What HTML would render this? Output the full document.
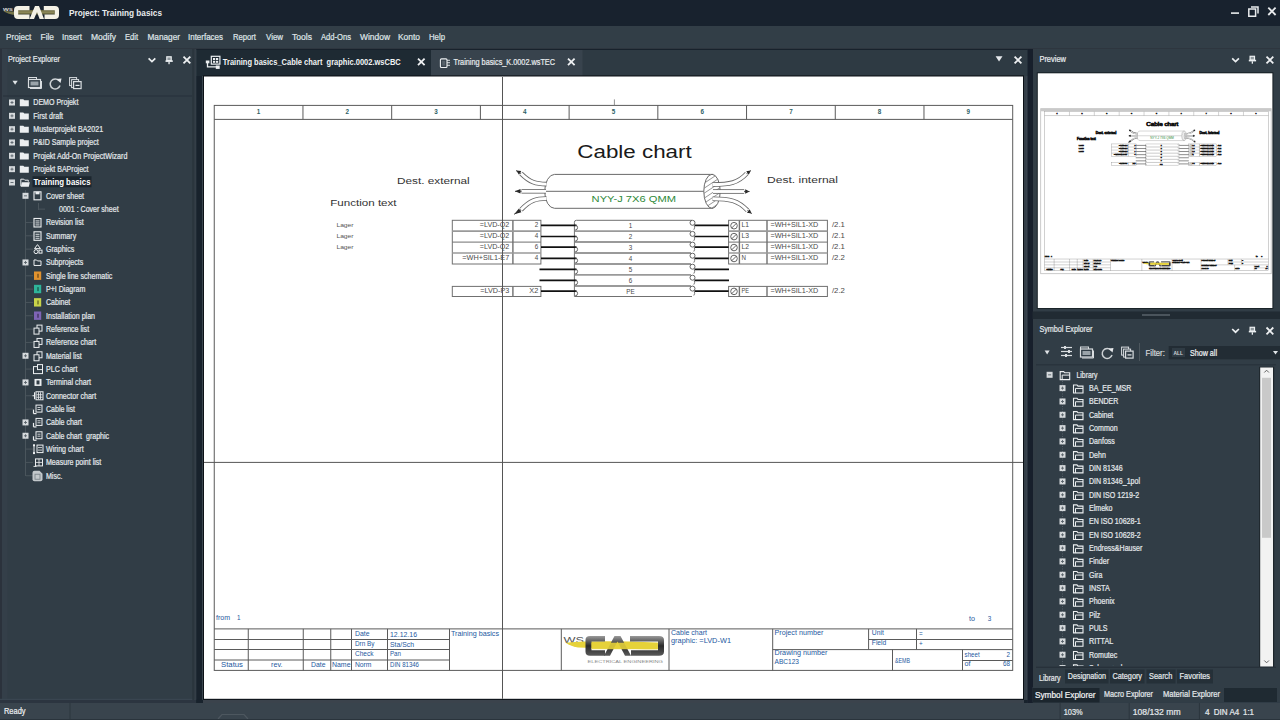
<!DOCTYPE html><html><head><meta charset="utf-8"><style>*{margin:0;padding:0}html,body{width:1280px;height:720px;overflow:hidden;background:#2e3a43}svg{display:block}text{font-family:"Liberation Sans",sans-serif;white-space:pre}</style></head><body>
<svg width="1280" height="720" viewBox="0 0 1280 720">
<rect x="0" y="0" width="1280" height="720" fill="#2e3a43" />
<rect x="0" y="0" width="1280" height="26" fill="#18222e" />
<rect x="0" y="26" width="1280" height="23" fill="#323e47" />
<rect x="0" y="48.5" width="1280" height="1.2" fill="#2a2f38" />
<text x="3" y="10.5" font-size="5.5" fill="#d8d8d8" font-weight="bold" textLength="10" lengthAdjust="spacingAndGlyphs" >ws</text>
<path d="M2.5 10.2 Q9 12.2 18 11.2 L18 15 Q8 15.2 2.5 10.2 Z" fill="#77764a" />
<rect x="17" y="10" width="38" height="4.5" fill="#6b6940" />
<rect x="18" y="11.3" width="36" height="1.8" fill="#8a8757" />
<path d="M29.5 6 L18 6 Q14 6 14 10 L14 15 Q14 19 18 19 L29.5 19 L29.5 14.6 L18.2 14.6 L18.2 10.3 L29.5 10.3 Z" fill="#f4f2e6" />
<path d="M29.5 19 L35 6 L39 6 L44 19 L39.6 19 L37 12 L34 19 Z" fill="#f4f2e6" />
<path d="M43.8 6 L55 6 Q59 6 59 10 L59 15 Q59 19 55 19 L44.5 19 L44.5 14.6 L54.8 14.6 L54.8 10.3 L43.8 10.3 Z" fill="#f4f2e6" />
<text x="69" y="15.7" font-size="9.6" fill="#e8ebed" font-weight="bold" textLength="93" lengthAdjust="spacingAndGlyphs" >Project: Training basics</text>
<rect x="1231" y="12.3" width="8" height="1.6" fill="#e8ebed" />
<path d="M1251 6.9 H1258 V13.5 M1248.8 9 H1255.6 V16.2 H1248.8 Z" fill="none" stroke="#e8ebed" stroke-width="1.5" />
<path d="M1268.3 7.6 L1275.6 15 M1275.6 7.6 L1268.3 15" fill="none" stroke="#e8ebed" stroke-width="1.8" />
<text x="6" y="39.8" font-size="8.3" fill="#dfe3e6" textLength="25.3" lengthAdjust="spacingAndGlyphs" stroke="#dfe3e6" stroke-width="0.22" >Project</text>
<text x="40.6" y="39.8" font-size="8.3" fill="#dfe3e6" textLength="13.4" lengthAdjust="spacingAndGlyphs" stroke="#dfe3e6" stroke-width="0.22" >File</text>
<text x="62" y="39.8" font-size="8.3" fill="#dfe3e6" textLength="20" lengthAdjust="spacingAndGlyphs" stroke="#dfe3e6" stroke-width="0.22" >Insert</text>
<text x="91" y="39.8" font-size="8.3" fill="#dfe3e6" textLength="25" lengthAdjust="spacingAndGlyphs" stroke="#dfe3e6" stroke-width="0.22" >Modify</text>
<text x="125" y="39.8" font-size="8.3" fill="#dfe3e6" textLength="13" lengthAdjust="spacingAndGlyphs" stroke="#dfe3e6" stroke-width="0.22" >Edit</text>
<text x="147.5" y="39.8" font-size="8.3" fill="#dfe3e6" textLength="32.5" lengthAdjust="spacingAndGlyphs" stroke="#dfe3e6" stroke-width="0.22" >Manager</text>
<text x="188" y="39.8" font-size="8.3" fill="#dfe3e6" textLength="35" lengthAdjust="spacingAndGlyphs" stroke="#dfe3e6" stroke-width="0.22" >Interfaces</text>
<text x="233" y="39.8" font-size="8.3" fill="#dfe3e6" textLength="23" lengthAdjust="spacingAndGlyphs" stroke="#dfe3e6" stroke-width="0.22" >Report</text>
<text x="266" y="39.8" font-size="8.3" fill="#dfe3e6" textLength="17" lengthAdjust="spacingAndGlyphs" stroke="#dfe3e6" stroke-width="0.22" >View</text>
<text x="292" y="39.8" font-size="8.3" fill="#dfe3e6" textLength="20" lengthAdjust="spacingAndGlyphs" stroke="#dfe3e6" stroke-width="0.22" >Tools</text>
<text x="321" y="39.8" font-size="8.3" fill="#dfe3e6" textLength="30" lengthAdjust="spacingAndGlyphs" stroke="#dfe3e6" stroke-width="0.22" >Add-Ons</text>
<text x="360" y="39.8" font-size="8.3" fill="#dfe3e6" textLength="30" lengthAdjust="spacingAndGlyphs" stroke="#dfe3e6" stroke-width="0.22" >Window</text>
<text x="398" y="39.8" font-size="8.3" fill="#dfe3e6" textLength="22" lengthAdjust="spacingAndGlyphs" stroke="#dfe3e6" stroke-width="0.22" >Konto</text>
<text x="429" y="39.8" font-size="8.3" fill="#dfe3e6" textLength="16" lengthAdjust="spacingAndGlyphs" stroke="#dfe3e6" stroke-width="0.22" >Help</text>
<rect x="0" y="49" width="192.5" height="651" fill="#313d46" />
<rect x="0" y="49" width="2" height="651" fill="#2b323c" />
<rect x="2" y="49" width="5.5" height="651" fill="#343f49" />
<rect x="0" y="698.8" width="196" height="1.2" fill="#394550" />
<rect x="0" y="700" width="196" height="3" fill="#2c3540" />
<rect x="192.3" y="49" width="2.1" height="651" fill="#2a353d" />
<rect x="194.4" y="49" width="2" height="651" fill="#343e47" />
<text x="8" y="62" font-size="8.3" fill="#e3e7ea" textLength="52" lengthAdjust="spacingAndGlyphs" stroke="#e3e7ea" stroke-width="0.22" >Project Explorer</text>
<path d="M148.60000000000002 58.3 L151.95000000000002 61.5 L155.3 58.3" fill="none" stroke="#eceff1" stroke-width="1.7" />
<rect x="166.8" y="56.8" width="4.4" height="3.8" fill="#8f989e" stroke="#eceff1" stroke-width="1.2" />
<rect x="165.5" y="60.3" width="7.3" height="1.6" fill="#eceff1" />
<rect x="168.4" y="61.8" width="1.3" height="2.4" fill="#eceff1" />
<path d="M183.5 56.6 L190.3 63.4 M190.3 56.6 L183.5 63.4" fill="none" stroke="#eef0f2" stroke-width="1.8" />
<path d="M12.5 80.8 H17.7 L15.1 84.8 Z" fill="#e0e4e7" />
<rect x="28.5" y="77.5" width="8" height="3" fill="none" stroke="#d9dde0" stroke-width="1" />
<rect x="28.5" y="79.5" width="12" height="8" fill="#313d46" stroke="#d9dde0" stroke-width="1.2" />
<rect x="30.5" y="81.5" width="8" height="4" fill="#9aa3a9" />
<path d="M41.5 81 V88.5 H30" fill="none" stroke="#d9dde0" stroke-width="1" />
<path d="M59 80.7 A5 5 0 1 0 60 85.5" fill="none" stroke="#cdd2d5" stroke-width="1.5" />
<path d="M56.5 79.0 L61.5 78.5 L60.5 83.0 Z" fill="#e6e9ec" />
<rect x="69.6" y="77.6" width="7" height="8" fill="none" stroke="#d9dde0" stroke-width="1" />
<rect x="71.6" y="79.6" width="7" height="8" fill="#313d46" stroke="#d9dde0" stroke-width="1" />
<rect x="73.6" y="81.6" width="7.5" height="7" fill="#313d46" stroke="#d9dde0" stroke-width="1.2" />
<rect x="75.5" y="84.8" width="4" height="1.2" fill="#e6e9ec" />
<rect x="3" y="95.5" width="189" height="1" fill="#27313a" />
<line x1="25.5" y1="190" x2="25.5" y2="476" stroke="#4a555c" stroke-width="1" />
<line x1="38.5" y1="203" x2="38.5" y2="210" stroke="#4a555c" stroke-width="1" />
<rect x="9" y="99.5" width="6" height="6" fill="#d5d9dc" />
<rect x="10.5" y="102.1" width="3" height="0.9" fill="#59636a" />
<rect x="11.55" y="101.0" width="0.9" height="3" fill="#59636a" />
<path d="M19.8 99.2 H23.3 L24.3 100.2 H28.8 V106.2 H19.8 Z" fill="#eceff1" />
<text x="33.3" y="105.3" font-size="8.2" fill="#e3e7ea" textLength="45.06" lengthAdjust="spacingAndGlyphs" stroke="#e3e7ea" stroke-width="0.22" >DEMO Projekt</text>
<rect x="9" y="112.83" width="6" height="6" fill="#d5d9dc" />
<rect x="10.5" y="115.42999999999999" width="3" height="0.9" fill="#59636a" />
<rect x="11.55" y="114.33" width="0.9" height="3" fill="#59636a" />
<path d="M19.8 112.53 H23.3 L24.3 113.53 H28.8 V119.53 H19.8 Z" fill="#eceff1" />
<text x="33.3" y="118.63" font-size="8.2" fill="#e3e7ea" textLength="29.78" lengthAdjust="spacingAndGlyphs" stroke="#e3e7ea" stroke-width="0.22" >First draft</text>
<rect x="9" y="126.16" width="6" height="6" fill="#d5d9dc" />
<rect x="10.5" y="128.76" width="3" height="0.9" fill="#59636a" />
<rect x="11.55" y="127.66" width="0.9" height="3" fill="#59636a" />
<path d="M19.8 125.86 H23.3 L24.3 126.86 H28.8 V132.86 H19.8 Z" fill="#eceff1" />
<text x="33.3" y="131.96" font-size="8.2" fill="#e3e7ea" textLength="69.77" lengthAdjust="spacingAndGlyphs" stroke="#e3e7ea" stroke-width="0.22" >Musterprojekt BA2021</text>
<rect x="9" y="139.48999999999998" width="6" height="6" fill="#d5d9dc" />
<rect x="10.5" y="142.08999999999997" width="3" height="0.9" fill="#59636a" />
<rect x="11.55" y="140.98999999999998" width="0.9" height="3" fill="#59636a" />
<path d="M19.8 139.18999999999997 H23.3 L24.3 140.18999999999997 H28.8 V146.18999999999997 H19.8 Z" fill="#eceff1" />
<text x="33.3" y="145.29" font-size="8.2" fill="#e3e7ea" textLength="65.45" lengthAdjust="spacingAndGlyphs" stroke="#e3e7ea" stroke-width="0.22" >P&amp;ID Sample project</text>
<rect x="9" y="152.82" width="6" height="6" fill="#d5d9dc" />
<rect x="10.5" y="155.42" width="3" height="0.9" fill="#59636a" />
<rect x="11.55" y="154.32" width="0.9" height="3" fill="#59636a" />
<path d="M19.8 152.51999999999998 H23.3 L24.3 153.51999999999998 H28.8 V159.51999999999998 H19.8 Z" fill="#eceff1" />
<text x="33.3" y="158.62" font-size="8.2" fill="#e3e7ea" textLength="94.06" lengthAdjust="spacingAndGlyphs" stroke="#e3e7ea" stroke-width="0.22" >Projekt Add-On ProjectWizard</text>
<rect x="9" y="166.14999999999998" width="6" height="6" fill="#d5d9dc" />
<rect x="10.5" y="168.74999999999997" width="3" height="0.9" fill="#59636a" />
<rect x="11.55" y="167.64999999999998" width="0.9" height="3" fill="#59636a" />
<path d="M19.8 165.84999999999997 H23.3 L24.3 166.84999999999997 H28.8 V172.84999999999997 H19.8 Z" fill="#eceff1" />
<text x="33.3" y="171.95" font-size="8.2" fill="#e3e7ea" textLength="55.26" lengthAdjust="spacingAndGlyphs" stroke="#e3e7ea" stroke-width="0.22" >Projekt BAProject</text>
<rect x="9" y="179.48" width="6" height="6" fill="#d5d9dc" />
<rect x="10.5" y="182.07999999999998" width="3" height="0.9" fill="#59636a" />
<path d="M20.8 179.17999999999998 H23.8 L24.8 180.17999999999998 H28.3 V181.67999999999998 M20.8 179.17999999999998 V186.17999999999998" fill="none" stroke="#eceff1" stroke-width="1" />
<path d="M21.8 182.17999999999998 H29.8 L28.8 186.67999999999998 H20.8 Z" fill="#eceff1" />
<rect x="32.5" y="176.28" width="59" height="11" fill="#1c262e" />
<text x="33.5" y="185.28" font-size="8.2" fill="#ffffff" font-weight="bold" textLength="57" lengthAdjust="spacingAndGlyphs" >Training basics</text>
<rect x="22.5" y="192.81" width="6" height="6" fill="#d5d9dc" />
<rect x="24.0" y="195.41" width="3" height="0.9" fill="#59636a" />
<rect x="34.0" y="191.81" width="7" height="8" fill="none" stroke="#eceff1" stroke-width="1.1" />
<rect x="35.5" y="191.81" width="4" height="2.5" fill="#eceff1" />
<text x="46" y="198.61" font-size="8.2" fill="#e3e7ea" textLength="38.02" lengthAdjust="spacingAndGlyphs" stroke="#e3e7ea" stroke-width="0.22" >Cover sheet</text>
<line x1="38.5" y1="209.14" x2="45" y2="209.14" stroke="#4a555c" stroke-width="1" />
<text x="59" y="211.94" font-size="8.2" fill="#e3e7ea" textLength="59.59" lengthAdjust="spacingAndGlyphs" stroke="#e3e7ea" stroke-width="0.22" >0001 : Cover sheet</text>
<line x1="26" y1="222.46999999999997" x2="33" y2="222.46999999999997" stroke="#4a555c" stroke-width="1" />
<rect x="34.0" y="218.46999999999997" width="7" height="8.5" fill="none" stroke="#eceff1" stroke-width="1.1" />
<rect x="35.5" y="220.46999999999997" width="4" height="0.9" fill="#eceff1" />
<rect x="35.5" y="222.46999999999997" width="4" height="0.9" fill="#eceff1" />
<rect x="35.5" y="224.46999999999997" width="4" height="0.9" fill="#eceff1" />
<text x="46" y="225.26999999999998" font-size="8.2" fill="#e3e7ea" textLength="37.62" lengthAdjust="spacingAndGlyphs" stroke="#e3e7ea" stroke-width="0.22" >Revision list</text>
<line x1="26" y1="235.8" x2="33" y2="235.8" stroke="#4a555c" stroke-width="1" />
<rect x="34.0" y="231.8" width="7" height="8.5" fill="none" stroke="#eceff1" stroke-width="1.1" />
<rect x="35.5" y="233.8" width="4" height="0.9" fill="#eceff1" />
<rect x="35.5" y="235.8" width="4" height="0.9" fill="#eceff1" />
<rect x="35.5" y="237.8" width="4" height="0.9" fill="#eceff1" />
<text x="46" y="238.60000000000002" font-size="8.2" fill="#e3e7ea" textLength="30.17" lengthAdjust="spacingAndGlyphs" stroke="#e3e7ea" stroke-width="0.22" >Summary</text>
<line x1="26" y1="249.13" x2="33" y2="249.13" stroke="#4a555c" stroke-width="1" />
<path d="M37.5 244.63 L40.5 248.63 H34.5 Z" fill="none" stroke="#eceff1" stroke-width="1" />
<circle cx="36.0" cy="251.63" r="2" fill="none" stroke="#eceff1" stroke-width="1"/>
<rect x="39.0" y="250.13" width="3" height="3" fill="none" stroke="#eceff1" stroke-width="1" />
<text x="46" y="251.93" font-size="8.2" fill="#e3e7ea" textLength="28.22" lengthAdjust="spacingAndGlyphs" stroke="#e3e7ea" stroke-width="0.22" >Graphics</text>
<rect x="22.5" y="259.46" width="6" height="6" fill="#d5d9dc" />
<rect x="24.0" y="262.06" width="3" height="0.9" fill="#59636a" />
<rect x="25.05" y="260.96" width="0.9" height="3" fill="#59636a" />
<path d="M34.0 259.96 H36.5 L37.5 260.96 H41.0 V265.46 H34.0 Z" fill="none" stroke="#eceff1" stroke-width="1" />
<text x="46" y="265.26" font-size="8.2" fill="#e3e7ea" textLength="37.24" lengthAdjust="spacingAndGlyphs" stroke="#e3e7ea" stroke-width="0.22" >Subprojects</text>
<line x1="26" y1="275.78999999999996" x2="33" y2="275.78999999999996" stroke="#4a555c" stroke-width="1" />
<rect x="34.0" y="271.48999999999995" width="7.2" height="8.4" fill="#e0922e" />
<rect x="37.0" y="273.78999999999996" width="2" height="4" fill="#00000055" />
<text x="46" y="278.59" font-size="8.2" fill="#e3e7ea" textLength="66.24" lengthAdjust="spacingAndGlyphs" stroke="#e3e7ea" stroke-width="0.22" >Single line schematic</text>
<line x1="26" y1="289.12" x2="33" y2="289.12" stroke="#4a555c" stroke-width="1" />
<rect x="34.0" y="284.82" width="7.2" height="8.4" fill="#2fb59a" />
<rect x="37.0" y="287.12" width="2" height="4" fill="#00000055" />
<text x="46" y="291.92" font-size="8.2" fill="#e3e7ea" textLength="39.39" lengthAdjust="spacingAndGlyphs" stroke="#e3e7ea" stroke-width="0.22" >P+I Diagram</text>
<line x1="26" y1="302.45" x2="33" y2="302.45" stroke="#4a555c" stroke-width="1" />
<rect x="34.0" y="298.15" width="7.2" height="8.4" fill="#c8d44a" />
<rect x="37.0" y="300.45" width="2" height="4" fill="#00000055" />
<text x="46" y="305.25" font-size="8.2" fill="#e3e7ea" textLength="24.31" lengthAdjust="spacingAndGlyphs" stroke="#e3e7ea" stroke-width="0.22" >Cabinet</text>
<line x1="26" y1="315.78" x2="33" y2="315.78" stroke="#4a555c" stroke-width="1" />
<rect x="34.0" y="311.47999999999996" width="7.2" height="8.4" fill="#7e64b5" />
<rect x="37.0" y="313.78" width="2" height="4" fill="#00000055" />
<text x="46" y="318.58" font-size="8.2" fill="#e3e7ea" textLength="49.01" lengthAdjust="spacingAndGlyphs" stroke="#e3e7ea" stroke-width="0.22" >Installation plan</text>
<line x1="26" y1="329.11" x2="33" y2="329.11" stroke="#4a555c" stroke-width="1" />
<rect x="37.0" y="325.11" width="5" height="6" fill="none" stroke="#eceff1" stroke-width="1" />
<rect x="34.0" y="328.11" width="5" height="6" fill="#313d46" stroke="#eceff1" stroke-width="1" />
<text x="46" y="331.91" font-size="8.2" fill="#e3e7ea" textLength="43.11" lengthAdjust="spacingAndGlyphs" stroke="#e3e7ea" stroke-width="0.22" >Reference list</text>
<line x1="26" y1="342.44" x2="33" y2="342.44" stroke="#4a555c" stroke-width="1" />
<rect x="37.0" y="338.44" width="5" height="6" fill="none" stroke="#eceff1" stroke-width="1" />
<rect x="34.0" y="341.44" width="5" height="6" fill="#313d46" stroke="#eceff1" stroke-width="1" />
<text x="46" y="345.24" font-size="8.2" fill="#e3e7ea" textLength="50.17" lengthAdjust="spacingAndGlyphs" stroke="#e3e7ea" stroke-width="0.22" >Reference chart</text>
<rect x="22.5" y="352.77" width="6" height="6" fill="#d5d9dc" />
<rect x="24.0" y="355.37" width="3" height="0.9" fill="#59636a" />
<rect x="25.05" y="354.27" width="0.9" height="3" fill="#59636a" />
<rect x="37.0" y="351.77" width="5" height="6" fill="none" stroke="#eceff1" stroke-width="1" />
<rect x="34.0" y="354.77" width="5" height="6" fill="#313d46" stroke="#eceff1" stroke-width="1" />
<text x="46" y="358.57" font-size="8.2" fill="#e3e7ea" textLength="35.66" lengthAdjust="spacingAndGlyphs" stroke="#e3e7ea" stroke-width="0.22" >Material list</text>
<line x1="26" y1="369.1" x2="33" y2="369.1" stroke="#4a555c" stroke-width="1" />
<rect x="33.5" y="366.6" width="9" height="7" fill="none" stroke="#eceff1" stroke-width="1" />
<rect x="37.5" y="364.6" width="5" height="5" fill="#313d46" stroke="#eceff1" stroke-width="1" />
<text x="46" y="371.90000000000003" font-size="8.2" fill="#e3e7ea" textLength="31.36" lengthAdjust="spacingAndGlyphs" stroke="#e3e7ea" stroke-width="0.22" >PLC chart</text>
<rect x="22.5" y="379.43" width="6" height="6" fill="#d5d9dc" />
<rect x="24.0" y="382.03000000000003" width="3" height="0.9" fill="#59636a" />
<rect x="25.05" y="380.93" width="0.9" height="3" fill="#59636a" />
<rect x="34.5" y="378.93" width="7" height="7" fill="#eceff1" />
<rect x="36.5" y="380.43" width="3" height="4" fill="#313d46" />
<text x="46" y="385.23" font-size="8.2" fill="#e3e7ea" textLength="45.07" lengthAdjust="spacingAndGlyphs" stroke="#e3e7ea" stroke-width="0.22" >Terminal chart</text>
<line x1="26" y1="395.76" x2="33" y2="395.76" stroke="#4a555c" stroke-width="1" />
<line x1="32.5" y1="395.76" x2="34.5" y2="395.76" stroke="#eceff1" stroke-width="1" />
<line x1="34.5" y1="392.26" x2="34.5" y2="399.26" stroke="#eceff1" stroke-width="1" />
<rect x="36.0" y="391.76" width="7" height="8" fill="none" stroke="#eceff1" stroke-width="1" />
<line x1="38.5" y1="392.26" x2="38.5" y2="399.26" stroke="#eceff1" stroke-width="0.8" />
<line x1="40.5" y1="392.26" x2="40.5" y2="399.26" stroke="#eceff1" stroke-width="0.8" />
<line x1="36.5" y1="394.76" x2="42.5" y2="394.76" stroke="#eceff1" stroke-width="0.8" />
<line x1="36.5" y1="397.26" x2="42.5" y2="397.26" stroke="#eceff1" stroke-width="0.8" />
<text x="46" y="398.56" font-size="8.2" fill="#e3e7ea" textLength="50.17" lengthAdjust="spacingAndGlyphs" stroke="#e3e7ea" stroke-width="0.22" >Connector chart</text>
<line x1="26" y1="409.09" x2="33" y2="409.09" stroke="#4a555c" stroke-width="1" />
<line x1="33.5" y1="409.59" x2="33.5" y2="413.59" stroke="#eceff1" stroke-width="1.2" />
<line x1="33.5" y1="413.59" x2="36.5" y2="413.59" stroke="#eceff1" stroke-width="1.2" />
<rect x="36.0" y="405.09" width="6" height="7" fill="none" stroke="#eceff1" stroke-width="1" />
<rect x="37.5" y="407.09" width="3" height="0.8" fill="#eceff1" />
<rect x="37.5" y="409.09" width="3" height="0.8" fill="#eceff1" />
<text x="46" y="411.89" font-size="8.2" fill="#e3e7ea" textLength="29.0" lengthAdjust="spacingAndGlyphs" stroke="#e3e7ea" stroke-width="0.22" >Cable list</text>
<rect x="22.5" y="419.42" width="6" height="6" fill="#d5d9dc" />
<rect x="24.0" y="422.02000000000004" width="3" height="0.9" fill="#59636a" />
<rect x="25.05" y="420.92" width="0.9" height="3" fill="#59636a" />
<line x1="33.5" y1="422.92" x2="33.5" y2="426.92" stroke="#eceff1" stroke-width="1.2" />
<line x1="33.5" y1="426.92" x2="36.5" y2="426.92" stroke="#eceff1" stroke-width="1.2" />
<rect x="36.0" y="418.42" width="6" height="7" fill="none" stroke="#eceff1" stroke-width="1" />
<rect x="37.5" y="420.42" width="3" height="0.8" fill="#eceff1" />
<rect x="37.5" y="422.42" width="3" height="0.8" fill="#eceff1" />
<text x="46" y="425.22" font-size="8.2" fill="#e3e7ea" textLength="36.06" lengthAdjust="spacingAndGlyphs" stroke="#e3e7ea" stroke-width="0.22" >Cable chart</text>
<rect x="22.5" y="432.75" width="6" height="6" fill="#d5d9dc" />
<rect x="24.0" y="435.35" width="3" height="0.9" fill="#59636a" />
<rect x="25.05" y="434.25" width="0.9" height="3" fill="#59636a" />
<line x1="33.5" y1="436.25" x2="33.5" y2="440.25" stroke="#eceff1" stroke-width="1.2" />
<line x1="33.5" y1="440.25" x2="36.5" y2="440.25" stroke="#eceff1" stroke-width="1.2" />
<rect x="36.0" y="431.75" width="6" height="7" fill="none" stroke="#eceff1" stroke-width="1" />
<rect x="37.5" y="433.75" width="3" height="0.8" fill="#eceff1" />
<rect x="37.5" y="435.75" width="3" height="0.8" fill="#eceff1" />
<text x="46" y="438.55" font-size="8.2" fill="#e3e7ea" textLength="63.11" lengthAdjust="spacingAndGlyphs" stroke="#e3e7ea" stroke-width="0.22" >Cable chart  graphic</text>
<line x1="26" y1="449.08" x2="33" y2="449.08" stroke="#4a555c" stroke-width="1" />
<line x1="34.0" y1="445.58" x2="34.0" y2="452.58" stroke="#eceff1" stroke-width="1" />
<rect x="33.0" y="444.28" width="2" height="2" fill="#eceff1" />
<rect x="33.0" y="452.08" width="2" height="2" fill="#eceff1" />
<rect x="37.0" y="445.08" width="6" height="7.5" fill="none" stroke="#eceff1" stroke-width="1" />
<line x1="38.0" y1="447.58" x2="42.0" y2="447.58" stroke="#eceff1" stroke-width="0.8" />
<line x1="38.0" y1="450.08" x2="42.0" y2="450.08" stroke="#eceff1" stroke-width="0.8" />
<text x="46" y="451.88" font-size="8.2" fill="#e3e7ea" textLength="37.62" lengthAdjust="spacingAndGlyphs" stroke="#e3e7ea" stroke-width="0.22" >Wiring chart</text>
<line x1="26" y1="462.41" x2="33" y2="462.41" stroke="#4a555c" stroke-width="1" />
<rect x="35.5" y="458.91" width="7" height="7" fill="none" stroke="#eceff1" stroke-width="1" />
<line x1="35.5" y1="462.41" x2="42.5" y2="462.41" stroke="#eceff1" stroke-width="0.8" />
<line x1="39.0" y1="458.91" x2="39.0" y2="465.91" stroke="#eceff1" stroke-width="0.8" />
<line x1="33.5" y1="466.41" x2="36.5" y2="466.41" stroke="#eceff1" stroke-width="0.9" />
<text x="46" y="465.21000000000004" font-size="8.2" fill="#e3e7ea" textLength="55.27" lengthAdjust="spacingAndGlyphs" stroke="#e3e7ea" stroke-width="0.22" >Measure point list</text>
<line x1="26" y1="475.74" x2="33" y2="475.74" stroke="#4a555c" stroke-width="1" />
<path d="M32.5 472.74 Q32.5 470.74 34.5 470.74 H39.5 L42.5 473.74 V479.24 Q42.5 481.24 40.5 481.24 H34.5 Q32.5 481.24 32.5 479.24 Z" fill="#c3c8cb" />
<rect x="35.0" y="474.24" width="5" height="5" fill="none" stroke="#7d868c" stroke-width="0.9" />
<text x="46" y="478.54" font-size="8.2" fill="#e3e7ea" textLength="16.45" lengthAdjust="spacingAndGlyphs" stroke="#e3e7ea" stroke-width="0.22" >Misc.</text>
<rect x="0" y="703" width="1280" height="17" fill="#39444d" />
<path d="M218 719 L222 714.5 H244 L248 719" fill="none" stroke="#4d575f" stroke-width="1.2" />
<rect x="0" y="719" width="1280" height="1" fill="#2a343c" />
<text x="4" y="713.9" font-size="8.4" fill="#eceff1" textLength="21.5" lengthAdjust="spacingAndGlyphs" stroke="#eceff1" stroke-width="0.22" >Ready</text>
<rect x="69.5" y="703" width="1" height="16" fill="#2c363e" />
<rect x="1059.6" y="703" width="1" height="16" fill="#2c363e" />
<rect x="1128.7" y="703" width="1" height="16" fill="#2c363e" />
<rect x="1198.9" y="703" width="1" height="16" fill="#2c363e" />
<text x="1063.7" y="714.5" font-size="8.3" fill="#e3e7ea" textLength="19" lengthAdjust="spacingAndGlyphs" stroke="#e3e7ea" stroke-width="0.22" >103%</text>
<text x="1132.8" y="714.5" font-size="8.3" fill="#e3e7ea" textLength="47.8" lengthAdjust="spacingAndGlyphs" stroke="#e3e7ea" stroke-width="0.22" >108/132 mm</text>
<text x="1205" y="714.5" font-size="8.3" fill="#e3e7ea" stroke="#e3e7ea" stroke-width="0.22" >4</text>
<text x="1213.8" y="714.5" font-size="8.3" fill="#e3e7ea" textLength="25.5" lengthAdjust="spacingAndGlyphs" stroke="#e3e7ea" stroke-width="0.22" >DIN A4</text>
<text x="1243" y="714.5" font-size="8.3" fill="#e3e7ea" textLength="11" lengthAdjust="spacingAndGlyphs" stroke="#e3e7ea" stroke-width="0.22" >1:1</text>
<rect x="196.4" y="49" width="831.3" height="654" fill="#18222c" />
<rect x="196.4" y="50" width="831.3" height="26" fill="#2e3a43" />
<rect x="202" y="76" width="1" height="624" fill="#3a464e" />
<rect x="1023.8" y="76" width="3.9" height="624" fill="#353f48" />
<rect x="1026.3" y="76" width="1" height="624" fill="#3d4650" />
<rect x="196.4" y="699.8" width="7" height="3.2" fill="#18222c" />
<rect x="203" y="699.6" width="821" height="3.4" fill="#3b434c" />
<rect x="197" y="50" width="234" height="26" fill="#1e2a33" />
<rect x="431" y="50" width="151.5" height="26" fill="#38434d" />
<rect x="205.8" y="60.5" width="3.6" height="2.8" fill="#eceff1" />
<path d="M207.5 63 V66.8 H216" fill="none" stroke="#eceff1" stroke-width="1.3" />
<rect x="211.3" y="56.3" width="8.6" height="7.8" fill="#1e2a33" stroke="#eceff1" stroke-width="1.2" />
<rect x="213" y="58" width="2.2" height="2" fill="#eceff1" />
<rect x="216" y="58" width="2.2" height="2" fill="#eceff1" />
<rect x="213" y="60.8" width="2.2" height="2" fill="#eceff1" />
<rect x="216" y="60.8" width="2.2" height="2" fill="#eceff1" />
<rect x="215.8" y="65.5" width="3.9" height="3.4" fill="#eceff1" />
<text x="222.8" y="65.3" font-size="8.8" fill="#f2f4f5" font-weight="bold" textLength="178" lengthAdjust="spacingAndGlyphs" >Training basics_Cable chart  graphic.0002.wsCBC</text>
<path d="M418 58.6 L424.6 65.2 M424.6 58.6 L418 65.2" fill="none" stroke="#eef0f2" stroke-width="1.8" />
<rect x="440.4" y="58.9" width="6.6" height="8.6" fill="none" stroke="#eceff1" stroke-width="1.1" rx="1" />
<rect x="442.2" y="60.8" width="3" height="4.8" fill="#56616a" />
<rect x="447" y="59.8" width="3" height="0.9" fill="#eceff1" />
<rect x="447" y="62.3" width="3" height="0.9" fill="#eceff1" />
<rect x="447" y="64.8" width="3" height="0.9" fill="#eceff1" />
<text x="453.5" y="64.9" font-size="8.5" fill="#e6e9ec" textLength="101.5" lengthAdjust="spacingAndGlyphs" stroke="#e6e9ec" stroke-width="0.22" >Training basics_K.0002.wsTEC</text>
<path d="M568 58.6 L574.6 65.2 M574.6 58.6 L568 65.2" fill="none" stroke="#eef0f2" stroke-width="1.8" />
<path d="M995.6 56.3 H1002.5 L999.05 61.5 Z" fill="#e6e9ec" />
<path d="M1014.6 56.6 L1021.4 63.4 M1021.4 56.6 L1014.6 63.4" fill="none" stroke="#eef0f2" stroke-width="1.8" />
<rect x="203" y="75.4" width="821" height="624.4" fill="#0c1116" />
<rect x="204" y="76.5" width="819" height="622.3" fill="#ffffff" />
<defs><g id="sheet">
<rect x="214.25" y="105.4" width="798.45" height="565.0" fill="none" stroke="#5a5a5a" stroke-width="1" />
<line x1="214.25" y1="119.4" x2="1012.7" y2="119.4" stroke="#5a5a5a" stroke-width="1" />
<line x1="302.9666666666667" y1="105.4" x2="302.9666666666667" y2="119.4" stroke="#5a5a5a" stroke-width="1" />
<line x1="391.68333333333334" y1="105.4" x2="391.68333333333334" y2="119.4" stroke="#5a5a5a" stroke-width="1" />
<line x1="480.4" y1="105.4" x2="480.4" y2="119.4" stroke="#5a5a5a" stroke-width="1" />
<line x1="569.1166666666667" y1="105.4" x2="569.1166666666667" y2="119.4" stroke="#5a5a5a" stroke-width="1" />
<line x1="657.8333333333334" y1="105.4" x2="657.8333333333334" y2="119.4" stroke="#5a5a5a" stroke-width="1" />
<line x1="746.55" y1="105.4" x2="746.55" y2="119.4" stroke="#5a5a5a" stroke-width="1" />
<line x1="835.2666666666667" y1="105.4" x2="835.2666666666667" y2="119.4" stroke="#5a5a5a" stroke-width="1" />
<line x1="923.9833333333333" y1="105.4" x2="923.9833333333333" y2="119.4" stroke="#5a5a5a" stroke-width="1" />
<text x="258.60833333333335" y="113.9" font-size="6.3" fill="#2d5f66" font-weight="bold" text-anchor="middle" >1</text>
<text x="347.325" y="113.9" font-size="6.3" fill="#2d5f66" font-weight="bold" text-anchor="middle" >2</text>
<text x="436.0416666666667" y="113.9" font-size="6.3" fill="#2d5f66" font-weight="bold" text-anchor="middle" >3</text>
<text x="524.7583333333333" y="113.9" font-size="6.3" fill="#2d5f66" font-weight="bold" text-anchor="middle" >4</text>
<text x="613.475" y="113.9" font-size="6.3" fill="#2d5f66" font-weight="bold" text-anchor="middle" >5</text>
<text x="702.1916666666666" y="113.9" font-size="6.3" fill="#2d5f66" font-weight="bold" text-anchor="middle" >6</text>
<text x="790.9083333333333" y="113.9" font-size="6.3" fill="#2d5f66" font-weight="bold" text-anchor="middle" >7</text>
<text x="879.625" y="113.9" font-size="6.3" fill="#2d5f66" font-weight="bold" text-anchor="middle" >8</text>
<text x="968.3416666666667" y="113.9" font-size="6.3" fill="#2d5f66" font-weight="bold" text-anchor="middle" >9</text>
<line x1="614.4" y1="99.4" x2="614.4" y2="105.4" stroke="#777" stroke-width="0.8" />
<text x="577.3" y="158.1" font-size="17.5" fill="#1a1a1a" textLength="114.4" lengthAdjust="spacingAndGlyphs" >Cable chart</text>
<text x="397" y="183.9" font-size="9.6" fill="#333333" textLength="72.7" lengthAdjust="spacingAndGlyphs" >Dest. external</text>
<text x="767" y="183.4" font-size="9.6" fill="#333333" textLength="71" lengthAdjust="spacingAndGlyphs" >Dest. internal</text>
<text x="330.2" y="206" font-size="9.6" fill="#333333" textLength="66.4" lengthAdjust="spacingAndGlyphs" >Function text</text>
<text x="336.4" y="227" font-size="6" fill="#555555" textLength="17.2" lengthAdjust="spacingAndGlyphs" >Lager</text>
<text x="336.4" y="238" font-size="6" fill="#555555" textLength="17.2" lengthAdjust="spacingAndGlyphs" >Lager</text>
<text x="336.4" y="249" font-size="6" fill="#555555" textLength="17.2" lengthAdjust="spacingAndGlyphs" >Lager</text>
<path d="M713.3 174.4 H554.5 A9.8 16.95 0 0 0 554.5 208.3 H713.3" fill="none" stroke="#6a6a6a" stroke-width="1" />
<line x1="544.7" y1="191.3" x2="704" y2="191.3" stroke="#6a6a6a" stroke-width="1" />
<clipPath id="ellclip"><ellipse cx="712" cy="191.3" rx="8.2" ry="17"/></clipPath>
<ellipse cx="712" cy="191.3" rx="8.2" ry="17" fill="#ffffff" stroke="#6a6a6a" stroke-width="1"/>
<g clip-path="url(#ellclip)">
<line x1="700" y1="166" x2="724" y2="150" stroke="#8a8a8a" stroke-width="0.9" />
<line x1="700" y1="171" x2="724" y2="155" stroke="#8a8a8a" stroke-width="0.9" />
<line x1="700" y1="176" x2="724" y2="160" stroke="#8a8a8a" stroke-width="0.9" />
<line x1="700" y1="181" x2="724" y2="165" stroke="#8a8a8a" stroke-width="0.9" />
<line x1="700" y1="186" x2="724" y2="170" stroke="#8a8a8a" stroke-width="0.9" />
<line x1="700" y1="191" x2="724" y2="175" stroke="#8a8a8a" stroke-width="0.9" />
<line x1="700" y1="196" x2="724" y2="180" stroke="#8a8a8a" stroke-width="0.9" />
<line x1="700" y1="201" x2="724" y2="185" stroke="#8a8a8a" stroke-width="0.9" />
<line x1="700" y1="206" x2="724" y2="190" stroke="#8a8a8a" stroke-width="0.9" />
<line x1="700" y1="211" x2="724" y2="195" stroke="#8a8a8a" stroke-width="0.9" />
<line x1="700" y1="216" x2="724" y2="200" stroke="#8a8a8a" stroke-width="0.9" />
<line x1="700" y1="221" x2="724" y2="205" stroke="#8a8a8a" stroke-width="0.9" />
<line x1="700" y1="226" x2="724" y2="210" stroke="#8a8a8a" stroke-width="0.9" />
</g>
<text x="591.6" y="202.2" font-size="9.6" fill="#2f8a3a" textLength="84.4" lengthAdjust="spacingAndGlyphs" stroke="none">NYY-J 7X6 QMM</text>
<path d="M546.5 184.1 C536 184.1 530 182.5 521 173.5" fill="none" stroke="#6a6a6a" stroke-width="4.6" stroke-linecap="butt"/>
<path d="M546.5 184.1 C536 184.1 530 182.5 521 173.5" fill="none" stroke="#ffffff" stroke-width="2.8999999999999995" />
<path d="M546 191.3 H521.5" fill="none" stroke="#6a6a6a" stroke-width="4.6" stroke-linecap="butt"/>
<path d="M546 191.3 H521.5" fill="none" stroke="#ffffff" stroke-width="2.8999999999999995" />
<path d="M546.5 198.5 C536 198.5 530 200.5 521 209.8" fill="none" stroke="#6a6a6a" stroke-width="4.6" stroke-linecap="butt"/>
<path d="M546.5 198.5 C536 198.5 530 200.5 521 209.8" fill="none" stroke="#ffffff" stroke-width="2.8999999999999995" />
<path d="M516.20 170.60 L521.28 171.10 L519.01 174.87 Z" fill="#222" />
<line x1="521" y1="173.5" x2="516.2" y2="170.6" stroke="#333" stroke-width="0.9" />
<path d="M515.00 191.30 L520.50 189.10 L520.50 193.50 Z" fill="#222" />
<line x1="521.5" y1="191.3" x2="515" y2="191.3" stroke="#333" stroke-width="0.9" />
<path d="M514.20 214.30 L518.95 208.52 L521.38 212.19 Z" fill="#222" />
<line x1="521" y1="209.8" x2="514.2" y2="214.3" stroke="#333" stroke-width="0.9" />
<path d="M712.5 184.5 C730 184.5 738 183 746.7 173.5" fill="none" stroke="#6a6a6a" stroke-width="4.6" stroke-linecap="butt"/>
<path d="M712.5 184.5 C730 184.5 738 183 746.7 173.5" fill="none" stroke="#ffffff" stroke-width="2.8999999999999995" />
<path d="M713 191.5 H744.2" fill="none" stroke="#6a6a6a" stroke-width="4.6" stroke-linecap="butt"/>
<path d="M713 191.5 H744.2" fill="none" stroke="#ffffff" stroke-width="2.8999999999999995" />
<path d="M712.5 198.7 C730 198.7 738 200.5 747.5 210.4" fill="none" stroke="#6a6a6a" stroke-width="4.6" stroke-linecap="butt"/>
<path d="M712.5 198.7 C730 198.7 738 200.5 747.5 210.4" fill="none" stroke="#ffffff" stroke-width="2.8999999999999995" />
<path d="M750.80 170.60 L748.79 174.72 L746.25 171.13 Z" fill="#222" />
<line x1="746.7" y1="173.5" x2="750.8" y2="170.6" stroke="#333" stroke-width="0.9" />
<path d="M749.50 191.50 L745.20 193.70 L745.20 189.30 Z" fill="#222" />
<line x1="744.2" y1="191.5" x2="749.5" y2="191.5" stroke="#333" stroke-width="0.9" />
<path d="M751.70 213.60 L746.96 212.76 L749.63 209.26 Z" fill="#222" />
<line x1="747.5" y1="210.4" x2="751.7" y2="213.6" stroke="#333" stroke-width="0.9" />
<rect x="452.3" y="220.3" width="88.59999999999997" height="43.69999999999999" fill="none" stroke="#707070" stroke-width="1" />
<line x1="512.9" y1="220.3" x2="512.9" y2="264.0" stroke="#707070" stroke-width="1.4" />
<line x1="452.3" y1="231.1" x2="540.9" y2="231.1" stroke="#9a9a9a" stroke-width="1.7" />
<line x1="452.3" y1="242.1" x2="540.9" y2="242.1" stroke="#707070" stroke-width="1" />
<line x1="452.3" y1="253.0" x2="540.9" y2="253.0" stroke="#9a9a9a" stroke-width="1.7" />
<rect x="452.3" y="286.4" width="88.59999999999997" height="10.100000000000023" fill="none" stroke="#707070" stroke-width="1" />
<line x1="512.9" y1="286.4" x2="512.9" y2="296.5" stroke="#707070" stroke-width="1.4" />
<rect x="728.6" y="220.3" width="98.79999999999995" height="43.69999999999999" fill="none" stroke="#707070" stroke-width="1" />
<line x1="739.4" y1="220.3" x2="739.4" y2="264.0" stroke="#707070" stroke-width="1.4" />
<line x1="767" y1="220.3" x2="767" y2="264.0" stroke="#707070" stroke-width="1.4" />
<line x1="728.6" y1="231.1" x2="827.4" y2="231.1" stroke="#9a9a9a" stroke-width="1.7" />
<line x1="728.6" y1="242.1" x2="827.4" y2="242.1" stroke="#707070" stroke-width="1" />
<line x1="728.6" y1="253.0" x2="827.4" y2="253.0" stroke="#9a9a9a" stroke-width="1.7" />
<rect x="728.6" y="286.4" width="98.79999999999995" height="10.100000000000023" fill="none" stroke="#707070" stroke-width="1" />
<line x1="739.4" y1="286.4" x2="739.4" y2="296.5" stroke="#707070" stroke-width="1.4" />
<line x1="767" y1="286.4" x2="767" y2="296.5" stroke="#707070" stroke-width="1.4" />
<path d="M692 220.3 H576.4 Q574.4 220.3 574.4 222.3 V296.5 H692" fill="none" stroke="#707070" stroke-width="1" />
<line x1="575" y1="231.1" x2="691" y2="231.1" stroke="#9a9a9a" stroke-width="1.8" />
<line x1="575" y1="242.0" x2="691" y2="242.0" stroke="#9a9a9a" stroke-width="1.8" />
<line x1="575" y1="253.0" x2="691" y2="253.0" stroke="#9a9a9a" stroke-width="1.8" />
<line x1="575" y1="264.0" x2="691" y2="264.0" stroke="#9a9a9a" stroke-width="1.8" />
<line x1="575" y1="274.9" x2="691" y2="274.9" stroke="#9a9a9a" stroke-width="1.8" />
<line x1="575" y1="286.0" x2="691" y2="286.0" stroke="#9a9a9a" stroke-width="1.8" />
<text x="509.3" y="227.10000000000002" font-size="6.3" fill="#4a4a4a" text-anchor="end" textLength="29.5" lengthAdjust="spacingAndGlyphs" >=LVD-Q2</text>
<text x="538.3" y="227.10000000000002" font-size="6.3" fill="#4a4a4a" text-anchor="end" >2</text>
<text x="509.3" y="237.9" font-size="6.3" fill="#4a4a4a" text-anchor="end" textLength="29.5" lengthAdjust="spacingAndGlyphs" >=LVD-Q2</text>
<text x="538.3" y="237.9" font-size="6.3" fill="#4a4a4a" text-anchor="end" >4</text>
<text x="509.3" y="248.9" font-size="6.3" fill="#4a4a4a" text-anchor="end" textLength="29.5" lengthAdjust="spacingAndGlyphs" >=LVD-Q2</text>
<text x="538.3" y="248.9" font-size="6.3" fill="#4a4a4a" text-anchor="end" >6</text>
<text x="509.3" y="259.8" font-size="6.3" fill="#4a4a4a" text-anchor="end" textLength="47" lengthAdjust="spacingAndGlyphs" >=WH+SIL1-E7</text>
<text x="538.3" y="259.8" font-size="6.3" fill="#4a4a4a" text-anchor="end" >4</text>
<text x="509.3" y="293.2" font-size="6.3" fill="#4a4a4a" text-anchor="end" textLength="29" lengthAdjust="spacingAndGlyphs" >=LVD-P3</text>
<text x="538.3" y="293.2" font-size="6.3" fill="#4a4a4a" text-anchor="end" textLength="9" lengthAdjust="spacingAndGlyphs" >X2</text>
<circle cx="734" cy="225.7" r="3.3" fill="none" stroke="#555" stroke-width="0.9"/>
<line x1="731.6" y1="228.1" x2="736.4" y2="223.29999999999998" stroke="#555" stroke-width="0.9" />
<text x="741.6" y="227.10000000000002" font-size="6.3" fill="#4a4a4a" textLength="7.5" lengthAdjust="spacingAndGlyphs" >L1</text>
<text x="770.5" y="227.10000000000002" font-size="6.3" fill="#4a4a4a" textLength="47.8" lengthAdjust="spacingAndGlyphs" >=WH+SIL1-XD</text>
<text x="831.9" y="227.10000000000002" font-size="6.3" fill="#4a4a4a" textLength="13" lengthAdjust="spacingAndGlyphs" >/2.1</text>
<circle cx="734" cy="236.6" r="3.3" fill="none" stroke="#555" stroke-width="0.9"/>
<line x1="731.6" y1="239.0" x2="736.4" y2="234.2" stroke="#555" stroke-width="0.9" />
<text x="741.6" y="237.9" font-size="6.3" fill="#4a4a4a" textLength="7.5" lengthAdjust="spacingAndGlyphs" >L3</text>
<text x="770.5" y="237.9" font-size="6.3" fill="#4a4a4a" textLength="47.8" lengthAdjust="spacingAndGlyphs" >=WH+SIL1-XD</text>
<text x="831.9" y="237.9" font-size="6.3" fill="#4a4a4a" textLength="13" lengthAdjust="spacingAndGlyphs" >/2.1</text>
<circle cx="734" cy="247.55" r="3.3" fill="none" stroke="#555" stroke-width="0.9"/>
<line x1="731.6" y1="249.95000000000002" x2="736.4" y2="245.15" stroke="#555" stroke-width="0.9" />
<text x="741.6" y="248.9" font-size="6.3" fill="#4a4a4a" textLength="7.5" lengthAdjust="spacingAndGlyphs" >L2</text>
<text x="770.5" y="248.9" font-size="6.3" fill="#4a4a4a" textLength="47.8" lengthAdjust="spacingAndGlyphs" >=WH+SIL1-XD</text>
<text x="831.9" y="248.9" font-size="6.3" fill="#4a4a4a" textLength="13" lengthAdjust="spacingAndGlyphs" >/2.1</text>
<circle cx="734" cy="258.5" r="3.3" fill="none" stroke="#555" stroke-width="0.9"/>
<line x1="731.6" y1="260.9" x2="736.4" y2="256.1" stroke="#555" stroke-width="0.9" />
<text x="741.6" y="259.8" font-size="6.3" fill="#4a4a4a" textLength="4.5" lengthAdjust="spacingAndGlyphs" >N</text>
<text x="770.5" y="259.8" font-size="6.3" fill="#4a4a4a" textLength="47.8" lengthAdjust="spacingAndGlyphs" >=WH+SIL1-XD</text>
<text x="831.9" y="259.8" font-size="6.3" fill="#4a4a4a" textLength="13" lengthAdjust="spacingAndGlyphs" >/2.2</text>
<circle cx="734" cy="291.4" r="3.3" fill="none" stroke="#555" stroke-width="0.9"/>
<line x1="731.6" y1="293.79999999999995" x2="736.4" y2="289.0" stroke="#555" stroke-width="0.9" />
<text x="741.6" y="293.2" font-size="6.3" fill="#4a4a4a" textLength="7.5" lengthAdjust="spacingAndGlyphs" >PE</text>
<text x="770.5" y="293.2" font-size="6.3" fill="#4a4a4a" textLength="47.8" lengthAdjust="spacingAndGlyphs" >=WH+SIL1-XD</text>
<text x="831.9" y="293.2" font-size="6.3" fill="#4a4a4a" textLength="13" lengthAdjust="spacingAndGlyphs" >/2.2</text>
<text x="630.5" y="227.70000000000002" font-size="6.3" fill="#4a4a4a" text-anchor="middle" >1</text>
<text x="630.5" y="238.8" font-size="6.3" fill="#4a4a4a" text-anchor="middle" >2</text>
<text x="630.5" y="249.5" font-size="6.3" fill="#4a4a4a" text-anchor="middle" >3</text>
<text x="630.5" y="260.6" font-size="6.3" fill="#4a4a4a" text-anchor="middle" >4</text>
<text x="630.5" y="271.6" font-size="6.3" fill="#4a4a4a" text-anchor="middle" >5</text>
<text x="630.5" y="282.6" font-size="6.3" fill="#4a4a4a" text-anchor="middle" >6</text>
<text x="630.5" y="293.5" font-size="6.3" fill="#4a4a4a" text-anchor="middle" >PE</text>
<line x1="541" y1="225.4" x2="576.5" y2="225.4" stroke="#111111" stroke-width="1.7" />
<line x1="694.5" y1="225.4" x2="728.6" y2="225.4" stroke="#111111" stroke-width="1.7" />
<path d="M575.2 225.20000000000002 A2.3 2.3 0 1 1 575.2 230.0" fill="none" stroke="#555" stroke-width="0.9"/>
<circle cx="692.5" cy="222.8" r="2.5" fill="none" stroke="#555" stroke-width="0.9"/>
<path d="M694.3 225.70000000000002 Q695.2 227.9 693.8 229.70000000000002" fill="none" stroke="#666" stroke-width="0.9"/>
<line x1="541" y1="236.5" x2="576.5" y2="236.5" stroke="#111111" stroke-width="1.7" />
<line x1="694.5" y1="236.5" x2="728.6" y2="236.5" stroke="#111111" stroke-width="1.7" />
<path d="M575.2 236.3 A2.3 2.3 0 1 1 575.2 241.1" fill="none" stroke="#555" stroke-width="0.9"/>
<circle cx="692.5" cy="233.9" r="2.5" fill="none" stroke="#555" stroke-width="0.9"/>
<path d="M694.3 236.8 Q695.2 239.0 693.8 240.8" fill="none" stroke="#666" stroke-width="0.9"/>
<line x1="541" y1="247.2" x2="576.5" y2="247.2" stroke="#111111" stroke-width="1.7" />
<line x1="694.5" y1="247.2" x2="728.6" y2="247.2" stroke="#111111" stroke-width="1.7" />
<path d="M575.2 247.0 A2.3 2.3 0 1 1 575.2 251.79999999999998" fill="none" stroke="#555" stroke-width="0.9"/>
<circle cx="692.5" cy="244.6" r="2.5" fill="none" stroke="#555" stroke-width="0.9"/>
<path d="M694.3 247.5 Q695.2 249.7 693.8 251.5" fill="none" stroke="#666" stroke-width="0.9"/>
<line x1="541" y1="258.3" x2="576.5" y2="258.3" stroke="#111111" stroke-width="1.7" />
<line x1="694.5" y1="258.3" x2="728.6" y2="258.3" stroke="#111111" stroke-width="1.7" />
<path d="M575.2 258.1 A2.3 2.3 0 1 1 575.2 262.90000000000003" fill="none" stroke="#555" stroke-width="0.9"/>
<circle cx="692.5" cy="255.70000000000002" r="2.5" fill="none" stroke="#555" stroke-width="0.9"/>
<path d="M694.3 258.6 Q695.2 260.8 693.8 262.6" fill="none" stroke="#666" stroke-width="0.9"/>
<line x1="539.5" y1="269.3" x2="576.5" y2="269.3" stroke="#111111" stroke-width="1.7" />
<line x1="694.5" y1="269.3" x2="729" y2="269.3" stroke="#111111" stroke-width="1.7" />
<path d="M575.2 269.1 A2.3 2.3 0 1 1 575.2 273.90000000000003" fill="none" stroke="#555" stroke-width="0.9"/>
<circle cx="692.5" cy="266.7" r="2.5" fill="none" stroke="#555" stroke-width="0.9"/>
<path d="M694.3 269.6 Q695.2 271.8 693.8 273.6" fill="none" stroke="#666" stroke-width="0.9"/>
<line x1="539.5" y1="280.3" x2="576.5" y2="280.3" stroke="#111111" stroke-width="1.7" />
<line x1="694.5" y1="280.3" x2="729" y2="280.3" stroke="#111111" stroke-width="1.7" />
<path d="M575.2 280.1 A2.3 2.3 0 1 1 575.2 284.90000000000003" fill="none" stroke="#555" stroke-width="0.9"/>
<circle cx="692.5" cy="277.7" r="2.5" fill="none" stroke="#555" stroke-width="0.9"/>
<path d="M694.3 280.6 Q695.2 282.8 693.8 284.6" fill="none" stroke="#666" stroke-width="0.9"/>
<line x1="541" y1="291.2" x2="576.5" y2="291.2" stroke="#111111" stroke-width="1.7" />
<line x1="694.5" y1="291.2" x2="728.6" y2="291.2" stroke="#111111" stroke-width="1.7" />
<path d="M575.2 291.0 A2.3 2.3 0 1 1 575.2 295.8" fill="none" stroke="#555" stroke-width="0.9"/>
<circle cx="692.5" cy="288.59999999999997" r="2.5" fill="none" stroke="#555" stroke-width="0.9"/>
<path d="M694.3 291.5 Q695.2 293.7 693.8 295.5" fill="none" stroke="#666" stroke-width="0.9"/>
<line x1="214.25" y1="628.9" x2="1012.7" y2="628.9" stroke="#5a5a5a" stroke-width="1" />
<line x1="214.25" y1="639.5" x2="449.5" y2="639.5" stroke="#5a5a5a" stroke-width="1" />
<line x1="214.25" y1="649.5" x2="449.5" y2="649.5" stroke="#5a5a5a" stroke-width="1" />
<line x1="214.25" y1="660.0" x2="449.5" y2="660.0" stroke="#5a5a5a" stroke-width="1" />
<line x1="248.25" y1="628.9" x2="248.25" y2="670.4" stroke="#5a5a5a" stroke-width="1" />
<line x1="303.25" y1="628.9" x2="303.25" y2="670.4" stroke="#5a5a5a" stroke-width="1" />
<line x1="330.75" y1="628.9" x2="330.75" y2="670.4" stroke="#5a5a5a" stroke-width="1" />
<line x1="351.5" y1="628.9" x2="351.5" y2="670.4" stroke="#5a5a5a" stroke-width="1" />
<line x1="387.5" y1="628.9" x2="387.5" y2="670.4" stroke="#5a5a5a" stroke-width="1" />
<line x1="449.5" y1="628.9" x2="449.5" y2="670.4" stroke="#5a5a5a" stroke-width="1" />
<line x1="561.3" y1="628.9" x2="561.3" y2="670.4" stroke="#5a5a5a" stroke-width="1" />
<line x1="669" y1="628.9" x2="669" y2="670.4" stroke="#5a5a5a" stroke-width="1" />
<line x1="772.7" y1="628.9" x2="772.7" y2="670.4" stroke="#5a5a5a" stroke-width="1" />
<line x1="868.6" y1="628.9" x2="868.6" y2="649.6" stroke="#5a5a5a" stroke-width="1" />
<line x1="916.5" y1="628.9" x2="916.5" y2="649.6" stroke="#5a5a5a" stroke-width="1" />
<line x1="868.6" y1="639.5" x2="1012.7" y2="639.5" stroke="#5a5a5a" stroke-width="1" />
<line x1="772.7" y1="649.6" x2="1012.7" y2="649.6" stroke="#5a5a5a" stroke-width="1" />
<line x1="892.5" y1="649.6" x2="892.5" y2="670.4" stroke="#5a5a5a" stroke-width="1" />
<line x1="962.5" y1="649.6" x2="962.5" y2="670.4" stroke="#5a5a5a" stroke-width="1" />
<line x1="962.5" y1="660.5" x2="1012.7" y2="660.5" stroke="#5a5a5a" stroke-width="1" />
<text x="216" y="620.3" font-size="6.3" fill="#1d58a0" textLength="14" lengthAdjust="spacingAndGlyphs" >from</text>
<text x="237" y="620.3" font-size="6.3" fill="#1d58a0" >1</text>
<text x="968.9" y="620.5" font-size="6.3" fill="#1d58a0" textLength="6" lengthAdjust="spacingAndGlyphs" >to</text>
<text x="987.8" y="620.5" font-size="6.3" fill="#1d58a0" >3</text>
<text x="355" y="636" font-size="6.3" fill="#1d58a0" textLength="14.5" lengthAdjust="spacingAndGlyphs" >Date</text>
<text x="390" y="636.5" font-size="6.3" fill="#1d58a0" textLength="27" lengthAdjust="spacingAndGlyphs" >12.12.16</text>
<text x="355" y="646.3" font-size="6.3" fill="#1d58a0" textLength="19.5" lengthAdjust="spacingAndGlyphs" >Drn By</text>
<text x="390" y="646.8" font-size="6.3" fill="#1d58a0" textLength="24" lengthAdjust="spacingAndGlyphs" >Sta/Sch</text>
<text x="355" y="656" font-size="6.3" fill="#1d58a0" textLength="18.5" lengthAdjust="spacingAndGlyphs" >Check</text>
<text x="390" y="655.5" font-size="6.3" fill="#1d58a0" textLength="11" lengthAdjust="spacingAndGlyphs" >Pan</text>
<text x="221" y="666.5" font-size="6.3" fill="#1d58a0" textLength="22" lengthAdjust="spacingAndGlyphs" >Status</text>
<text x="271" y="666.5" font-size="6.3" fill="#1d58a0" textLength="11.5" lengthAdjust="spacingAndGlyphs" >rev.</text>
<text x="311" y="666.5" font-size="6.3" fill="#1d58a0" textLength="14.5" lengthAdjust="spacingAndGlyphs" >Date</text>
<text x="332" y="666.5" font-size="6.3" fill="#1d58a0" textLength="18.5" lengthAdjust="spacingAndGlyphs" >Name</text>
<text x="355" y="666.5" font-size="6.3" fill="#1d58a0" textLength="16.5" lengthAdjust="spacingAndGlyphs" >Norm</text>
<text x="390" y="667" font-size="6.3" fill="#1d58a0" textLength="29" lengthAdjust="spacingAndGlyphs" >DIN 81346</text>
<text x="451" y="636.3" font-size="6.3" fill="#1d58a0" textLength="48" lengthAdjust="spacingAndGlyphs" >Training basics</text>
<text x="671" y="635.4" font-size="6.3" fill="#1d58a0" textLength="36" lengthAdjust="spacingAndGlyphs" >Cable chart</text>
<text x="671" y="643" font-size="6.3" fill="#1d58a0" textLength="60" lengthAdjust="spacingAndGlyphs" >graphic: =LVD-W1</text>
<text x="774.5" y="634.8" font-size="6.3" fill="#1d58a0" textLength="48.8" lengthAdjust="spacingAndGlyphs" >Project number</text>
<text x="871.8" y="634.8" font-size="6.3" fill="#1d58a0" textLength="12" lengthAdjust="spacingAndGlyphs" >Unit</text>
<text x="919" y="635.5" font-size="6.3" fill="#1d58a0" >=</text>
<text x="871.8" y="645" font-size="6.3" fill="#1d58a0" textLength="14.5" lengthAdjust="spacingAndGlyphs" >Field</text>
<text x="919" y="645.5" font-size="6.3" fill="#1d58a0" >+</text>
<text x="774.5" y="655.3" font-size="6.3" fill="#1d58a0" textLength="53" lengthAdjust="spacingAndGlyphs" >Drawing number</text>
<text x="774.5" y="663.7" font-size="6.3" fill="#1d58a0" textLength="24.5" lengthAdjust="spacingAndGlyphs" >ABC123</text>
<text x="895" y="663" font-size="6.3" fill="#1d58a0" textLength="15" lengthAdjust="spacingAndGlyphs" >&amp;EMB</text>
<text x="964.6" y="656.5" font-size="6.3" fill="#1d58a0" textLength="15" lengthAdjust="spacingAndGlyphs" >sheet</text>
<text x="1010" y="656.5" font-size="6.3" fill="#1d58a0" text-anchor="end" >2</text>
<text x="964.6" y="666" font-size="6.3" fill="#1d58a0" textLength="6" lengthAdjust="spacingAndGlyphs" >of</text>
<text x="1010" y="666" font-size="6.3" fill="#1d58a0" text-anchor="end" >68</text>
<text x="563.5" y="642.7" font-size="8.8" fill="#555555" textLength="20.5" lengthAdjust="spacingAndGlyphs" >WS</text>
<linearGradient id="lg" x1="0" y1="0" x2="0" y2="1"><stop offset="0" stop-color="#9a9a9a"/><stop offset="0.5" stop-color="#2a2a2a"/><stop offset="1" stop-color="#5a5a5a"/></linearGradient>
<path d="M565.6 642.7 Q600 640 657.5 642.7 L657.5 649.2 Q610 649 578 647.5 Q570 646 565.6 642.7 Z" fill="#e6d23a" stroke="none"/>
<path d="M605 636 L590 636 Q585.5 636 585.5 640 L585.5 651.8 Q585.5 655.8 590 655.8 L605 655.8 L605 650.3 L591.5 650.3 L591.5 641.5 L605 641.5 Z" fill="url(#lg)" stroke="none"/>
<path d="M604 655.8 L614.5 636 L620.5 636 L631 655.8 L625 655.8 L617.5 641.5 L610 655.8 Z" fill="url(#lg)" stroke="none"/>
<path d="M630 636 L659 636 Q664 636 664 640 L664 651.8 Q664 655.8 659 655.8 L631 655.8 L631 650.3 L658 650.3 L658 641.5 L630 641.5 Z" fill="url(#lg)" stroke="none"/>
<rect x="591.5" y="642.7" width="66.5" height="6.5" fill="#e6d23a" opacity="0.9" stroke="none"/>
<text x="587.5" y="663" font-size="4.4" fill="#8a8a8a" textLength="75.5" lengthAdjust="spacingAndGlyphs" >ELECTRICAL ENGINEERING</text>
</g></defs>
<use href="#sheet"/>
<line x1="502.5" y1="77" x2="502.5" y2="698.8" stroke="#555555" stroke-width="1" />
<line x1="204" y1="462.4" x2="1023" y2="462.4" stroke="#555555" stroke-width="1" />
<rect x="1027.7" y="49" width="5.3" height="654" fill="#171f2b" />
<rect x="1033" y="49" width="247" height="654" fill="#313d46" />
<rect x="1033" y="49" width="3.5" height="654" fill="#323d45" />
<text x="1039.4" y="62" font-size="8.6" fill="#e8ebed" textLength="26.6" lengthAdjust="spacingAndGlyphs" stroke="#e8ebed" stroke-width="0.22" >Preview</text>
<path d="M1232.2 58.3 L1235.5500000000002 61.5 L1238.9 58.3" fill="none" stroke="#eceff1" stroke-width="1.7" />
<rect x="1250.1" y="56.3" width="4.4" height="3.8" fill="#8f989e" stroke="#eceff1" stroke-width="1.2" />
<rect x="1248.8" y="59.8" width="7.3" height="1.6" fill="#eceff1" />
<rect x="1251.7" y="61.3" width="1.3" height="2.4" fill="#eceff1" />
<path d="M1266.5 56.6 L1273.3 63.4 M1273.3 56.6 L1266.5 63.4" fill="none" stroke="#eef0f2" stroke-width="1.8" />
<rect x="1036.8" y="72.3" width="236.6" height="236.5" fill="#161e24" />
<rect x="1037.8" y="73.3" width="234.6" height="234.7" fill="#ffffff" />
<use href="#sheet" stroke="#111" stroke-width="2.4" transform="translate(984.567,81.919) scale(0.2802,0.2816)"/>
<rect x="1040.7" y="108.7" width="230.5" height="165" fill="none" stroke="#bdbdbd" stroke-width="0.8" />
<rect x="1041" y="108.7" width="230" height="2.6" fill="#c9c9c9" />
<rect x="1032.5" y="311.5" width="247.5" height="7.5" fill="#212b33" />
<rect x="1142" y="314" width="28" height="2" fill="#4a545c" />
<text x="1039.4" y="332.3" font-size="8.3" fill="#e3e7ea" textLength="53" lengthAdjust="spacingAndGlyphs" stroke="#e3e7ea" stroke-width="0.22" >Symbol Explorer</text>
<path d="M1232.2 329.0 L1235.5500000000002 332.20000000000005 L1238.9 329.0" fill="none" stroke="#eceff1" stroke-width="1.7" />
<rect x="1250.1" y="327.3" width="4.4" height="3.8" fill="#8f989e" stroke="#eceff1" stroke-width="1.2" />
<rect x="1248.8" y="330.8" width="7.3" height="1.6" fill="#eceff1" />
<rect x="1251.7" y="332.3" width="1.3" height="2.4" fill="#eceff1" />
<path d="M1266.5 327.5 L1273.3 334.3 M1273.3 327.5 L1266.5 334.3" fill="none" stroke="#eef0f2" stroke-width="1.8" />
<path d="M1044.6 350.5 H1049.6 L1047.1 354.5 Z" fill="#e0e4e7" />
<line x1="1061" y1="347.5" x2="1072" y2="347.5" stroke="#d9dde0" stroke-width="1.2" />
<line x1="1061" y1="351.5" x2="1072" y2="351.5" stroke="#d9dde0" stroke-width="1.2" />
<line x1="1061" y1="355.5" x2="1072" y2="355.5" stroke="#d9dde0" stroke-width="1.2" />
<rect x="1064" y="346" width="2" height="3" fill="#d9dde0" />
<rect x="1068" y="350" width="2" height="3" fill="#d9dde0" />
<rect x="1065" y="354" width="2" height="3" fill="#d9dde0" />
<rect x="1080.5" y="347.0" width="8" height="3" fill="none" stroke="#d9dde0" stroke-width="1" />
<rect x="1080.5" y="349.0" width="12" height="8" fill="#313d46" stroke="#d9dde0" stroke-width="1.2" />
<rect x="1082.5" y="351.0" width="8" height="4" fill="#9aa3a9" />
<path d="M1093.5 350.5 V358.0 H1082" fill="none" stroke="#d9dde0" stroke-width="1" />
<path d="M1111 350.2 A5 5 0 1 0 1112 355" fill="none" stroke="#cdd2d5" stroke-width="1.5" />
<path d="M1108.5 348.5 L1113.5 348 L1112.5 352.5 Z" fill="#e6e9ec" />
<rect x="1121.6" y="347.1" width="7" height="8" fill="none" stroke="#d9dde0" stroke-width="1" />
<rect x="1123.6" y="349.1" width="7" height="8" fill="#313d46" stroke="#d9dde0" stroke-width="1" />
<rect x="1125.6" y="351.1" width="7.5" height="7" fill="#313d46" stroke="#d9dde0" stroke-width="1.2" />
<rect x="1127.5" y="354.3" width="4" height="1.2" fill="#e6e9ec" />
<rect x="1139" y="343" width="1" height="18" fill="#4d575e" />
<text x="1145.6" y="355.5" font-size="8.3" fill="#d5d9dc" textLength="19.2" lengthAdjust="spacingAndGlyphs" stroke="#d5d9dc" stroke-width="0.22" >Filter:</text>
<rect x="1168.7" y="346" width="111.3" height="13.3" fill="#222c34" />
<rect x="1172" y="348" width="13" height="9" fill="#2f3b44" />
<text x="1173.5" y="354.5" font-size="4.5" fill="#d0d4d7" font-weight="bold" textLength="9.5" lengthAdjust="spacingAndGlyphs" >ALL</text>
<text x="1190" y="355.5" font-size="8.3" fill="#eef0f2" textLength="27" lengthAdjust="spacingAndGlyphs" stroke="#eef0f2" stroke-width="0.22" >Show all</text>
<path d="M1273 351 H1278 L1275.5 354.5 Z" fill="#e0e4e7" />
<rect x="1036" y="364.3" width="240" height="1" fill="#27313a" />
<clipPath id="symclip"><rect x="1036" y="366" width="224" height="300"/></clipPath><g clip-path="url(#symclip)">
<rect x="1046.6" y="371.8" width="6" height="6" fill="#d5d9dc" />
<rect x="1048.1" y="374.40000000000003" width="3" height="0.9" fill="#59636a" />
<path d="M1060.2 371.6 H1063.7 L1064.7 372.8 H1069.7 V379.6 H1060.2 Z" fill="none" stroke="#eceff1" stroke-width="1.1" />
<path d="M1062.2 375.1 H1069.7 M1062.2 375.1 V379.6" fill="none" stroke="#eceff1" stroke-width="1" />
<line x1="1062.5" y1="381" x2="1062.5" y2="668" stroke="#56616a" stroke-width="1" stroke-dasharray="1 1.5"/>
<text x="1076.5" y="377.6" font-size="8.2" fill="#e3e7ea" textLength="21" lengthAdjust="spacingAndGlyphs" stroke="#e3e7ea" stroke-width="0.22" >Library</text>
<rect x="1059.5" y="385.13" width="6" height="6" fill="#d5d9dc" />
<rect x="1061.0" y="387.73" width="3" height="0.9" fill="#59636a" />
<rect x="1062.05" y="386.63" width="0.9" height="3" fill="#59636a" />
<path d="M1073.5 384.93 H1077 L1078 386.13 H1083 V392.93 H1073.5 Z" fill="none" stroke="#eceff1" stroke-width="1.1" />
<path d="M1075.5 388.43 H1083 M1075.5 388.43 V392.93" fill="none" stroke="#eceff1" stroke-width="1" />
<text x="1089" y="390.93" font-size="8.2" fill="#e3e7ea" textLength="42.33" lengthAdjust="spacingAndGlyphs" stroke="#e3e7ea" stroke-width="0.22" >BA_EE_MSR</text>
<rect x="1059.5" y="398.46000000000004" width="6" height="6" fill="#d5d9dc" />
<rect x="1061.0" y="401.06000000000006" width="3" height="0.9" fill="#59636a" />
<rect x="1062.05" y="399.96000000000004" width="0.9" height="3" fill="#59636a" />
<path d="M1073.5 398.26000000000005 H1077 L1078 399.46000000000004 H1083 V406.26000000000005 H1073.5 Z" fill="none" stroke="#eceff1" stroke-width="1.1" />
<path d="M1075.5 401.76000000000005 H1083 M1075.5 401.76000000000005 V406.26000000000005" fill="none" stroke="#eceff1" stroke-width="1" />
<text x="1089" y="404.26000000000005" font-size="8.2" fill="#e3e7ea" textLength="29.39" lengthAdjust="spacingAndGlyphs" stroke="#e3e7ea" stroke-width="0.22" >BENDER</text>
<rect x="1059.5" y="411.79" width="6" height="6" fill="#d5d9dc" />
<rect x="1061.0" y="414.39000000000004" width="3" height="0.9" fill="#59636a" />
<rect x="1062.05" y="413.29" width="0.9" height="3" fill="#59636a" />
<path d="M1073.5 411.59000000000003 H1077 L1078 412.79 H1083 V419.59000000000003 H1073.5 Z" fill="none" stroke="#eceff1" stroke-width="1.1" />
<path d="M1075.5 415.09000000000003 H1083 M1075.5 415.09000000000003 V419.59000000000003" fill="none" stroke="#eceff1" stroke-width="1" />
<text x="1089" y="417.59000000000003" font-size="8.2" fill="#e3e7ea" textLength="24.31" lengthAdjust="spacingAndGlyphs" stroke="#e3e7ea" stroke-width="0.22" >Cabinet</text>
<rect x="1059.5" y="425.12" width="6" height="6" fill="#d5d9dc" />
<rect x="1061.0" y="427.72" width="3" height="0.9" fill="#59636a" />
<rect x="1062.05" y="426.62" width="0.9" height="3" fill="#59636a" />
<path d="M1073.5 424.92 H1077 L1078 426.12 H1083 V432.92 H1073.5 Z" fill="none" stroke="#eceff1" stroke-width="1.1" />
<path d="M1075.5 428.42 H1083 M1075.5 428.42 V432.92" fill="none" stroke="#eceff1" stroke-width="1" />
<text x="1089" y="430.92" font-size="8.2" fill="#e3e7ea" textLength="28.61" lengthAdjust="spacingAndGlyphs" stroke="#e3e7ea" stroke-width="0.22" >Common</text>
<rect x="1059.5" y="438.45" width="6" height="6" fill="#d5d9dc" />
<rect x="1061.0" y="441.05" width="3" height="0.9" fill="#59636a" />
<rect x="1062.05" y="439.95" width="0.9" height="3" fill="#59636a" />
<path d="M1073.5 438.25 H1077 L1078 439.45 H1083 V446.25 H1073.5 Z" fill="none" stroke="#eceff1" stroke-width="1.1" />
<path d="M1075.5 441.75 H1083 M1075.5 441.75 V446.25" fill="none" stroke="#eceff1" stroke-width="1" />
<text x="1089" y="444.25" font-size="8.2" fill="#e3e7ea" textLength="25.87" lengthAdjust="spacingAndGlyphs" stroke="#e3e7ea" stroke-width="0.22" >Danfoss</text>
<rect x="1059.5" y="451.78000000000003" width="6" height="6" fill="#d5d9dc" />
<rect x="1061.0" y="454.38000000000005" width="3" height="0.9" fill="#59636a" />
<rect x="1062.05" y="453.28000000000003" width="0.9" height="3" fill="#59636a" />
<path d="M1073.5 451.58000000000004 H1077 L1078 452.78000000000003 H1083 V459.58000000000004 H1073.5 Z" fill="none" stroke="#eceff1" stroke-width="1.1" />
<path d="M1075.5 455.08000000000004 H1083 M1075.5 455.08000000000004 V459.58000000000004" fill="none" stroke="#eceff1" stroke-width="1" />
<text x="1089" y="457.58000000000004" font-size="8.2" fill="#e3e7ea" textLength="16.86" lengthAdjust="spacingAndGlyphs" stroke="#e3e7ea" stroke-width="0.22" >Dehn</text>
<rect x="1059.5" y="465.11" width="6" height="6" fill="#d5d9dc" />
<rect x="1061.0" y="467.71000000000004" width="3" height="0.9" fill="#59636a" />
<rect x="1062.05" y="466.61" width="0.9" height="3" fill="#59636a" />
<path d="M1073.5 464.91 H1077 L1078 466.11 H1083 V472.91 H1073.5 Z" fill="none" stroke="#eceff1" stroke-width="1.1" />
<path d="M1075.5 468.41 H1083 M1075.5 468.41 V472.91" fill="none" stroke="#eceff1" stroke-width="1" />
<text x="1089" y="470.91" font-size="8.2" fill="#e3e7ea" textLength="33.71" lengthAdjust="spacingAndGlyphs" stroke="#e3e7ea" stroke-width="0.22" >DIN 81346</text>
<rect x="1059.5" y="478.44" width="6" height="6" fill="#d5d9dc" />
<rect x="1061.0" y="481.04" width="3" height="0.9" fill="#59636a" />
<rect x="1062.05" y="479.94" width="0.9" height="3" fill="#59636a" />
<path d="M1073.5 478.24 H1077 L1078 479.44 H1083 V486.24 H1073.5 Z" fill="none" stroke="#eceff1" stroke-width="1.1" />
<path d="M1075.5 481.74 H1083 M1075.5 481.74 V486.24" fill="none" stroke="#eceff1" stroke-width="1" />
<text x="1089" y="484.24" font-size="8.2" fill="#e3e7ea" textLength="50.97" lengthAdjust="spacingAndGlyphs" stroke="#e3e7ea" stroke-width="0.22" >DIN 81346_1pol</text>
<rect x="1059.5" y="491.77000000000004" width="6" height="6" fill="#d5d9dc" />
<rect x="1061.0" y="494.37000000000006" width="3" height="0.9" fill="#59636a" />
<rect x="1062.05" y="493.27000000000004" width="0.9" height="3" fill="#59636a" />
<path d="M1073.5 491.57000000000005 H1077 L1078 492.77000000000004 H1083 V499.57000000000005 H1073.5 Z" fill="none" stroke="#eceff1" stroke-width="1.1" />
<path d="M1075.5 495.07000000000005 H1083 M1075.5 495.07000000000005 V499.57000000000005" fill="none" stroke="#eceff1" stroke-width="1" />
<text x="1089" y="497.57000000000005" font-size="8.2" fill="#e3e7ea" textLength="50.17" lengthAdjust="spacingAndGlyphs" stroke="#e3e7ea" stroke-width="0.22" >DIN ISO 1219-2</text>
<rect x="1059.5" y="505.1" width="6" height="6" fill="#d5d9dc" />
<rect x="1061.0" y="507.70000000000005" width="3" height="0.9" fill="#59636a" />
<rect x="1062.05" y="506.6" width="0.9" height="3" fill="#59636a" />
<path d="M1073.5 504.90000000000003 H1077 L1078 506.1 H1083 V512.9000000000001 H1073.5 Z" fill="none" stroke="#eceff1" stroke-width="1.1" />
<path d="M1075.5 508.40000000000003 H1083 M1075.5 508.40000000000003 V512.9000000000001" fill="none" stroke="#eceff1" stroke-width="1" />
<text x="1089" y="510.90000000000003" font-size="8.2" fill="#e3e7ea" textLength="23.51" lengthAdjust="spacingAndGlyphs" stroke="#e3e7ea" stroke-width="0.22" >Elmeko</text>
<rect x="1059.5" y="518.4300000000001" width="6" height="6" fill="#d5d9dc" />
<rect x="1061.0" y="521.0300000000001" width="3" height="0.9" fill="#59636a" />
<rect x="1062.05" y="519.9300000000001" width="0.9" height="3" fill="#59636a" />
<path d="M1073.5 518.23 H1077 L1078 519.4300000000001 H1083 V526.23 H1073.5 Z" fill="none" stroke="#eceff1" stroke-width="1.1" />
<path d="M1075.5 521.73 H1083 M1075.5 521.73 V526.23" fill="none" stroke="#eceff1" stroke-width="1" />
<text x="1089" y="524.23" font-size="8.2" fill="#e3e7ea" textLength="51.74" lengthAdjust="spacingAndGlyphs" stroke="#e3e7ea" stroke-width="0.22" >EN ISO 10628-1</text>
<rect x="1059.5" y="531.7600000000001" width="6" height="6" fill="#d5d9dc" />
<rect x="1061.0" y="534.3600000000001" width="3" height="0.9" fill="#59636a" />
<rect x="1062.05" y="533.2600000000001" width="0.9" height="3" fill="#59636a" />
<path d="M1073.5 531.5600000000001 H1077 L1078 532.7600000000001 H1083 V539.5600000000001 H1073.5 Z" fill="none" stroke="#eceff1" stroke-width="1.1" />
<path d="M1075.5 535.0600000000001 H1083 M1075.5 535.0600000000001 V539.5600000000001" fill="none" stroke="#eceff1" stroke-width="1" />
<text x="1089" y="537.5600000000001" font-size="8.2" fill="#e3e7ea" textLength="51.74" lengthAdjust="spacingAndGlyphs" stroke="#e3e7ea" stroke-width="0.22" >EN ISO 10628-2</text>
<rect x="1059.5" y="545.09" width="6" height="6" fill="#d5d9dc" />
<rect x="1061.0" y="547.69" width="3" height="0.9" fill="#59636a" />
<rect x="1062.05" y="546.59" width="0.9" height="3" fill="#59636a" />
<path d="M1073.5 544.89 H1077 L1078 546.09 H1083 V552.89 H1073.5 Z" fill="none" stroke="#eceff1" stroke-width="1.1" />
<path d="M1075.5 548.39 H1083 M1075.5 548.39 V552.89" fill="none" stroke="#eceff1" stroke-width="1" />
<text x="1089" y="550.89" font-size="8.2" fill="#e3e7ea" textLength="53.31" lengthAdjust="spacingAndGlyphs" stroke="#e3e7ea" stroke-width="0.22" >Endress&amp;Hauser</text>
<rect x="1059.5" y="558.4200000000001" width="6" height="6" fill="#d5d9dc" />
<rect x="1061.0" y="561.0200000000001" width="3" height="0.9" fill="#59636a" />
<rect x="1062.05" y="559.9200000000001" width="0.9" height="3" fill="#59636a" />
<path d="M1073.5 558.22 H1077 L1078 559.4200000000001 H1083 V566.22 H1073.5 Z" fill="none" stroke="#eceff1" stroke-width="1.1" />
<path d="M1075.5 561.72 H1083 M1075.5 561.72 V566.22" fill="none" stroke="#eceff1" stroke-width="1" />
<text x="1089" y="564.22" font-size="8.2" fill="#e3e7ea" textLength="19.99" lengthAdjust="spacingAndGlyphs" stroke="#e3e7ea" stroke-width="0.22" >Finder</text>
<rect x="1059.5" y="571.75" width="6" height="6" fill="#d5d9dc" />
<rect x="1061.0" y="574.35" width="3" height="0.9" fill="#59636a" />
<rect x="1062.05" y="573.25" width="0.9" height="3" fill="#59636a" />
<path d="M1073.5 571.55 H1077 L1078 572.75 H1083 V579.55 H1073.5 Z" fill="none" stroke="#eceff1" stroke-width="1.1" />
<path d="M1075.5 575.05 H1083 M1075.5 575.05 V579.55" fill="none" stroke="#eceff1" stroke-width="1" />
<text x="1089" y="577.55" font-size="8.2" fill="#e3e7ea" textLength="13.32" lengthAdjust="spacingAndGlyphs" stroke="#e3e7ea" stroke-width="0.22" >Gira</text>
<rect x="1059.5" y="585.08" width="6" height="6" fill="#d5d9dc" />
<rect x="1061.0" y="587.6800000000001" width="3" height="0.9" fill="#59636a" />
<rect x="1062.05" y="586.58" width="0.9" height="3" fill="#59636a" />
<path d="M1073.5 584.88 H1077 L1078 586.08 H1083 V592.88 H1073.5 Z" fill="none" stroke="#eceff1" stroke-width="1.1" />
<path d="M1075.5 588.38 H1083 M1075.5 588.38 V592.88" fill="none" stroke="#eceff1" stroke-width="1" />
<text x="1089" y="590.88" font-size="8.2" fill="#e3e7ea" textLength="20.77" lengthAdjust="spacingAndGlyphs" stroke="#e3e7ea" stroke-width="0.22" >INSTA</text>
<rect x="1059.5" y="598.4100000000001" width="6" height="6" fill="#d5d9dc" />
<rect x="1061.0" y="601.0100000000001" width="3" height="0.9" fill="#59636a" />
<rect x="1062.05" y="599.9100000000001" width="0.9" height="3" fill="#59636a" />
<path d="M1073.5 598.21 H1077 L1078 599.4100000000001 H1083 V606.21 H1073.5 Z" fill="none" stroke="#eceff1" stroke-width="1.1" />
<path d="M1075.5 601.71 H1083 M1075.5 601.71 V606.21" fill="none" stroke="#eceff1" stroke-width="1" />
<text x="1089" y="604.21" font-size="8.2" fill="#e3e7ea" textLength="25.48" lengthAdjust="spacingAndGlyphs" stroke="#e3e7ea" stroke-width="0.22" >Phoenix</text>
<rect x="1059.5" y="611.74" width="6" height="6" fill="#d5d9dc" />
<rect x="1061.0" y="614.34" width="3" height="0.9" fill="#59636a" />
<rect x="1062.05" y="613.24" width="0.9" height="3" fill="#59636a" />
<path d="M1073.5 611.54 H1077 L1078 612.74 H1083 V619.54 H1073.5 Z" fill="none" stroke="#eceff1" stroke-width="1.1" />
<path d="M1075.5 615.04 H1083 M1075.5 615.04 V619.54" fill="none" stroke="#eceff1" stroke-width="1" />
<text x="1089" y="617.54" font-size="8.2" fill="#e3e7ea" textLength="11.36" lengthAdjust="spacingAndGlyphs" stroke="#e3e7ea" stroke-width="0.22" >Pilz</text>
<rect x="1059.5" y="625.07" width="6" height="6" fill="#d5d9dc" />
<rect x="1061.0" y="627.6700000000001" width="3" height="0.9" fill="#59636a" />
<rect x="1062.05" y="626.57" width="0.9" height="3" fill="#59636a" />
<path d="M1073.5 624.87 H1077 L1078 626.07 H1083 V632.87 H1073.5 Z" fill="none" stroke="#eceff1" stroke-width="1.1" />
<path d="M1075.5 628.37 H1083 M1075.5 628.37 V632.87" fill="none" stroke="#eceff1" stroke-width="1" />
<text x="1089" y="630.87" font-size="8.2" fill="#e3e7ea" textLength="18.42" lengthAdjust="spacingAndGlyphs" stroke="#e3e7ea" stroke-width="0.22" >PULS</text>
<rect x="1059.5" y="638.4000000000001" width="6" height="6" fill="#d5d9dc" />
<rect x="1061.0" y="641.0000000000001" width="3" height="0.9" fill="#59636a" />
<rect x="1062.05" y="639.9000000000001" width="0.9" height="3" fill="#59636a" />
<path d="M1073.5 638.2 H1077 L1078 639.4000000000001 H1083 V646.2 H1073.5 Z" fill="none" stroke="#eceff1" stroke-width="1.1" />
<path d="M1075.5 641.7 H1083 M1075.5 641.7 V646.2" fill="none" stroke="#eceff1" stroke-width="1" />
<text x="1089" y="644.2" font-size="8.2" fill="#e3e7ea" textLength="24.29" lengthAdjust="spacingAndGlyphs" stroke="#e3e7ea" stroke-width="0.22" >RITTAL</text>
<rect x="1059.5" y="651.73" width="6" height="6" fill="#d5d9dc" />
<rect x="1061.0" y="654.33" width="3" height="0.9" fill="#59636a" />
<rect x="1062.05" y="653.23" width="0.9" height="3" fill="#59636a" />
<path d="M1073.5 651.53 H1077 L1078 652.73 H1083 V659.53 H1073.5 Z" fill="none" stroke="#eceff1" stroke-width="1.1" />
<path d="M1075.5 655.03 H1083 M1075.5 655.03 V659.53" fill="none" stroke="#eceff1" stroke-width="1" />
<text x="1089" y="657.53" font-size="8.2" fill="#e3e7ea" textLength="28.22" lengthAdjust="spacingAndGlyphs" stroke="#e3e7ea" stroke-width="0.22" >Romutec</text>
<rect x="1059.5" y="665.0600000000001" width="6" height="6" fill="#d5d9dc" />
<rect x="1061.0" y="667.6600000000001" width="3" height="0.9" fill="#59636a" />
<rect x="1062.05" y="666.5600000000001" width="0.9" height="3" fill="#59636a" />
<path d="M1073.5 664.86 H1077 L1078 666.0600000000001 H1083 V672.86 H1073.5 Z" fill="none" stroke="#eceff1" stroke-width="1.1" />
<path d="M1075.5 668.36 H1083 M1075.5 668.36 V672.86" fill="none" stroke="#eceff1" stroke-width="1" />
<text x="1089" y="670.86" font-size="8.2" fill="#e3e7ea" textLength="33.31" lengthAdjust="spacingAndGlyphs" stroke="#e3e7ea" stroke-width="0.22" >Schmersal</text>
</g>
<rect x="1259.2" y="366.8" width="15" height="300.5" fill="#1d252b" />
<rect x="1260.2" y="367.5" width="12.8" height="299.2" fill="#f2f2f2" />
<rect x="1262" y="377.8" width="9" height="160" fill="#c9c9c9" />
<path d="M1264.3 372.5 L1266.6 370.2 L1268.9 372.5" fill="none" stroke="#606060" stroke-width="1" />
<path d="M1264.3 660.5 L1266.6 662.8 L1268.9 660.5" fill="none" stroke="#606060" stroke-width="1" />
<rect x="1036" y="666.7" width="240" height="3" fill="#27313a" />
<rect x="1036" y="668" width="240" height="18" fill="#313d46" />
<rect x="1065" y="669.5" width="43.5" height="14" fill="#253038" />
<rect x="1110" y="669.5" width="34.5" height="14" fill="#253038" />
<rect x="1146.5" y="669.5" width="29" height="14" fill="#253038" />
<rect x="1177" y="669.5" width="36" height="14" fill="#253038" />
<text x="1039" y="680.8" font-size="8.2" fill="#e3e7ea" textLength="21.6" lengthAdjust="spacingAndGlyphs" stroke="#e3e7ea" stroke-width="0.22" >Library</text>
<text x="1067.8" y="679.3" font-size="8.2" fill="#e3e7ea" textLength="38.2" lengthAdjust="spacingAndGlyphs" stroke="#e3e7ea" stroke-width="0.22" >Designation</text>
<text x="1112.5" y="679.3" font-size="8.2" fill="#e3e7ea" textLength="29.5" lengthAdjust="spacingAndGlyphs" stroke="#e3e7ea" stroke-width="0.22" >Category</text>
<text x="1149" y="679.3" font-size="8.2" fill="#e3e7ea" textLength="23.4" lengthAdjust="spacingAndGlyphs" stroke="#e3e7ea" stroke-width="0.22" >Search</text>
<text x="1179.6" y="679.3" font-size="8.2" fill="#e3e7ea" textLength="30.4" lengthAdjust="spacingAndGlyphs" stroke="#e3e7ea" stroke-width="0.22" >Favorites</text>
<rect x="1032.5" y="687" width="247.5" height="15.5" fill="#313d46" />
<rect x="1032.5" y="688" width="67" height="14.5" fill="#1c262e" />
<rect x="1224" y="688" width="53" height="14" fill="#1f2a32" />
<text x="1035" y="698.3" font-size="8.3" fill="#f0f2f3" textLength="60.5" lengthAdjust="spacingAndGlyphs" stroke="#f0f2f3" stroke-width="0.22" >Symbol Explorer</text>
<text x="1104" y="697.3" font-size="8.2" fill="#e3e7ea" textLength="49" lengthAdjust="spacingAndGlyphs" stroke="#e3e7ea" stroke-width="0.22" >Macro Explorer</text>
<text x="1163" y="697.3" font-size="8.2" fill="#e3e7ea" textLength="57" lengthAdjust="spacingAndGlyphs" stroke="#e3e7ea" stroke-width="0.22" >Material Explorer</text>
</svg></body></html>
